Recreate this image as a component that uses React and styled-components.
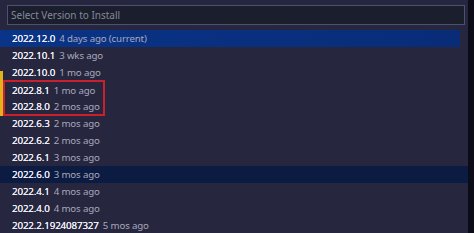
import styled, { createGlobalStyle } from "styled-components";

const GlobalStyle = createGlobalStyle`
    html, body {
        margin: 0;
        padding: 0;
        background: #0d0d1b;
        overflow: hidden;
    }
    body {
        font-family: "Noto Sans", "Liberation Sans", sans-serif;
    }
`;

const versions = [
    { name: "2022.12.0", detail: "4 days ago (current)" },
    { name: "2022.10.1", detail: "3 wks ago" },
    { name: "2022.10.0", detail: "1 mo ago" },
    { name: "2022.8.1", detail: "1 mo ago" },
    { name: "2022.8.0", detail: "2 mos ago" },
    { name: "2022.6.3", detail: "2 mos ago" },
    { name: "2022.6.2", detail: "2 mos ago" },
    { name: "2022.6.1", detail: "3 mos ago" },
    { name: "2022.6.0", detail: "3 mos ago" },
    { name: "2022.4.1", detail: "4 mos ago" },
    { name: "2022.4.0", detail: "4 mos ago" },
    { name: "2022.2.1924087327", detail: "5 mos ago" },
];

const Screen = styled.div`
    display: flex;
    width: 474px;
    height: 233px;
    overflow: hidden;
    position: relative;
`;

const Picker = styled.div`
    width: 468px;
    height: 233px;
    background: #27263f;
    display: flex;
    flex-direction: column;
`;

const EdgeStrip = styled.div`
    flex: 1;
    background: #0c0c19;
`;

const GutterMark = styled.div`
    position: absolute;
    left: 0;
    top: 71px;
    width: 3px;
    height: 45px;
    background: #e2b21c;
`;

const InputWrap = styled.div`
    padding: 5px 3px 5px 7px;
`;

const Input = styled.div`
    height: 18px;
    border: 1px solid #4c5072;
    background: #1b1e2d;
    display: flex;
    align-items: center;
    padding-left: 3px;
    font-size: 10px;
    color: #858899;
`;

const List = styled.div`
    display: flex;
    flex-direction: column;
`;

const Row = styled.div`
    height: 17px;
    flex-shrink: 0;
    display: flex;
    align-items: center;
    gap: 4px;
    padding-left: 12px;
    margin-right: ${(p) => (p.$selected ? "8px" : "0")};
    background: ${(p) =>
        p.$selected ? "linear-gradient(90deg, #0a3487, #082c78)" : p.$hover ? "#0c1b42" : "transparent"};
    white-space: nowrap;
`;

const Group = styled.div`
    margin: -1px 0 -1px 3px;
    width: 98px;
    border: 2px solid #c8202c;
    display: flex;
    flex-direction: column;
    ${Row} {
        height: 16px;
        padding-left: 7px;
    }
`;

const Name = styled.span`
    color: #f2f2fa;
    font-size: 9.8px;
    letter-spacing: -0.15px;
    text-shadow: 0 0 0.4px #f2f2fa;
`;

const Detail = styled.span`
    color: #a8a8ba;
    font-size: 9.7px;
    letter-spacing: -0.15px;
`;

function VersionRow({ v, selected, hover }) {
    return (
        <Row $selected={selected} $hover={hover}>
            <Name>{v.name}</Name>
            <Detail>{v.detail}</Detail>
        </Row>
    );
}

export default function App() {
    return (
        <Screen>
            <GlobalStyle />
            <Picker>
                <InputWrap>
                    <Input>Select Version to Install</Input>
                </InputWrap>
                <List>
                    <VersionRow v={versions[0]} selected />
                    <VersionRow v={versions[1]} />
                    <VersionRow v={versions[2]} />
                    <Group>
                        <VersionRow v={versions[3]} />
                        <VersionRow v={versions[4]} />
                    </Group>
                    {versions.slice(5).map((v) => (
                        <VersionRow key={v.name} v={v} hover={v.name === "2022.6.0"} />
                    ))}
                </List>
            </Picker>
            <EdgeStrip />
            <GutterMark />
        </Screen>
    );
}
